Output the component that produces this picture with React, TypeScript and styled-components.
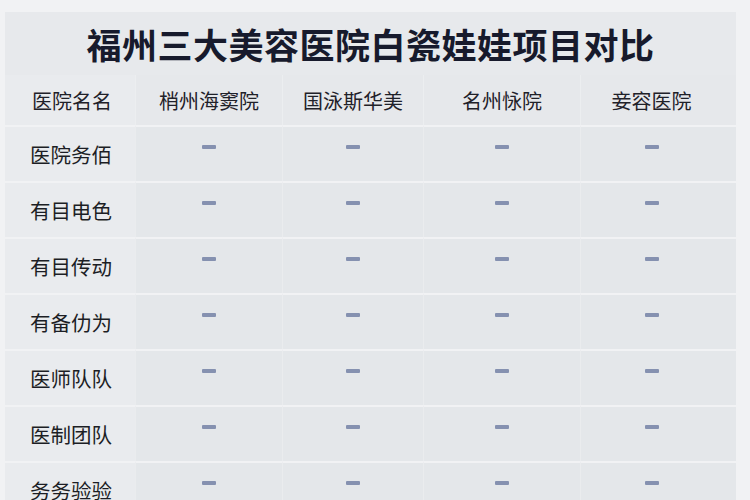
import { Fragment } from "react";
import styled, { createGlobalStyle } from "styled-components";

const GlobalStyle = createGlobalStyle`
  html, body {
    margin: 0;
    padding: 0;
    background: #f1f2f4;
    font-family: "Noto Sans CJK SC", "Noto Sans", sans-serif;
  }
`;

const Page = styled.div`
  width: 750px;
  height: 500px;
  overflow: hidden;
  padding: 12px 14px 0 5px;
  box-sizing: border-box;
  background: #f1f2f4;
`;

const Card = styled.div`
  width: 731px;
  background: #e5e8eb;
`;

const Title = styled.h1`
  margin: 0;
  height: 63px;
  display: flex;
  align-items: center;
  justify-content: center;
  font-size: 35px;
  font-weight: 700;
  color: #171a2c;
  letter-spacing: 0.5px;
  background: #e7e9ec;
`;

const Table = styled.div`
  display: grid;
  grid-template-columns: 130px 147px 141px 157px 156px;
`;

const HeadCell = styled.div<{ $first?: boolean; $shift?: number }>`
  height: 50px;
  display: flex;
  align-items: center;
  justify-content: ${(p) => (p.$first ? "flex-start" : "center")};
  padding-left: ${(p) => (p.$first ? "27px" : "0")};
  padding-right: ${(p) => p.$shift ?? 0}px;
  box-sizing: border-box;
  font-size: 20px;
  color: #1f2129;
  background: ${(p) => (p.$first ? "#e9ebee" : "#e6e8eb")};
  border-left: ${(p) => (p.$first ? "none" : "1px solid #eceef0")};
`;

const LabelCell = styled.div`
  height: 56px;
  display: flex;
  align-items: center;
  padding-left: 25px;
  box-sizing: border-box;
  font-size: 20.5px;
  color: #1c1e25;
  background: #e9ebee;
  border-top: 2px solid #f1f2f4;
`;

const ValueCell = styled.div<{ $shift?: number }>`
  height: 56px;
  display: flex;
  justify-content: center;
  padding-top: 18px;
  padding-right: ${(p) => p.$shift ?? 0}px;
  box-sizing: border-box;
  background: #e4e7ea;
  border-top: 2px solid #f1f2f4;
  border-left: 1px solid #eaecee;
`;

const Dash = styled.span`
  display: block;
  width: 14px;
  height: 4px;
  border-radius: 1px;
  background: #8591b0;
`;

const hospitals = ["梢州海窦院", "国泳斯华美", "名州怺院", "妾容医院"];
const shifts = [0, 0, 0, 14];
const rows = [
  "医院务佰",
  "有目电色",
  "有目传动",
  "有备仂为",
  "医师队队",
  "医制团队",
  "务务验验",
];

export default function App() {
  return (
    <>
      <GlobalStyle />
      <Page>
        <Card>
          <Title>福州三大美容医院白瓷娃娃项目对比</Title>
          <Table>
            <HeadCell $first>医院名名</HeadCell>
            {hospitals.map((h, i) => (
              <HeadCell key={h} $shift={shifts[i]}>
                {h}
              </HeadCell>
            ))}
            {rows.map((r) => (
              <Fragment key={r}>
                <LabelCell>{r}</LabelCell>
                {hospitals.map((h, i) => (
                  <ValueCell key={r + h} $shift={shifts[i]}>
                    <Dash />
                  </ValueCell>
                ))}
              </Fragment>
            ))}
          </Table>
        </Card>
      </Page>
    </>
  );
}
